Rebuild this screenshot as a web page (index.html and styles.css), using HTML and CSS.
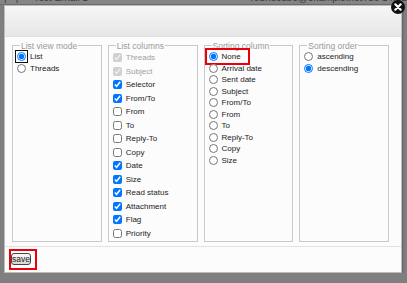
FILE: index.html
```html
<!DOCTYPE html>
<html lang="en">
  <head>
    <meta charset="UTF-8" />
    <meta name="viewport" content="width=device-width, initial-scale=1.0" />
    <title>List options</title>
    <link rel="stylesheet" href="styles.css">
  </head>
  <body>
    <div class="backdrop">
      <div class="backdrop-row">
        <span class="bd-flag">|</span>
        <span class="bd-flag">|</span>
        <span class="bd-subject">Test Email 1</span>
        <span class="bd-from">roundcube@example.net</span>
        <span class="bd-date">Tue 14:02</span>
      </div>
    </div>

    <div class="dialog">
      <div class="dialog-title">
        <span class="close-btn">
          <svg width="14" height="14" viewBox="0 0 14 14">
            <circle cx="7" cy="7" r="7" fill="#111" />
            <path d="M4.3 4.3 L9.7 9.7 M9.7 4.3 L4.3 9.7" stroke="#fff" stroke-width="2.2" stroke-linecap="round" />
          </svg>
        </span>
      </div>

      <div class="dialog-body">
        <fieldset class="group">
          <legend>List view mode</legend>
          <label class="row"><input type="radio" name="mode" class="focused" checked> List</label>
          <label class="row"><input type="radio" name="mode"> Threads</label>
        </fieldset>

        <fieldset class="group tall">
          <legend>List columns</legend>
          <label class="row disabled"><input type="checkbox" checked disabled> Threads</label>
          <label class="row disabled"><input type="checkbox" checked disabled> Subject</label>
          <label class="row"><input type="checkbox" checked> Selector</label>
          <label class="row"><input type="checkbox" checked> From/To</label>
          <label class="row"><input type="checkbox"> From</label>
          <label class="row"><input type="checkbox"> To</label>
          <label class="row"><input type="checkbox"> Reply-To</label>
          <label class="row"><input type="checkbox"> Copy</label>
          <label class="row"><input type="checkbox" checked> Date</label>
          <label class="row"><input type="checkbox" checked> Size</label>
          <label class="row"><input type="checkbox" checked> Read status</label>
          <label class="row"><input type="checkbox" checked> Attachment</label>
          <label class="row"><input type="checkbox" checked> Flag</label>
          <label class="row"><input type="checkbox"> Priority</label>
        </fieldset>

        <fieldset class="group">
          <legend>Sorting column</legend>
          <label class="row marked"><input type="radio" name="sort" checked> None<span class="mark"></span></label>
          <label class="row"><input type="radio" name="sort"> Arrival date</label>
          <label class="row"><input type="radio" name="sort"> Sent date</label>
          <label class="row"><input type="radio" name="sort"> Subject</label>
          <label class="row"><input type="radio" name="sort"> From/To</label>
          <label class="row"><input type="radio" name="sort"> From</label>
          <label class="row"><input type="radio" name="sort"> To</label>
          <label class="row"><input type="radio" name="sort"> Reply-To</label>
          <label class="row"><input type="radio" name="sort"> Copy</label>
          <label class="row"><input type="radio" name="sort"> Size</label>
        </fieldset>

        <fieldset class="group">
          <legend>Sorting order</legend>
          <label class="row"><input type="radio" name="order"> ascending</label>
          <label class="row"><input type="radio" name="order" checked> descending</label>
        </fieldset>
      </div>

      <div class="dialog-footer">
        <span class="save-mark"><button class="btn">save</button></span>
      </div>
    </div>
  </body>
</html>
```

FILE: styles.css
```css
body {
  margin: 0;
  padding: 0;
  background-color: #7f7f7f;
  font-family: "Liberation Sans", Arial, sans-serif;
  font-size: 8px;
  color: #222;
}
.backdrop {
  height: 5px;
  overflow: hidden;
  background: #858585;
  border-bottom: 1px solid #6c6c6c;
  box-sizing: border-box;
}
.backdrop-row {
  display: flex;
  margin-top: -8px;
  font-size: 10px;
  color: #3a3a3a;
  white-space: nowrap;
}
.bd-flag {
  width: 8px;
  margin-left: 4px;
}
.bd-subject {
  margin-left: 10px;
  width: 225px;
}
.bd-from {
  width: 115px;
}
.dialog {
  position: relative;
  width: 398px;
  height: 268px;
  margin-left: 4px;
  background: #fcfcfc;
  border: 1px solid #bdbdbd;
  box-sizing: border-box;
  box-shadow: 1px 1px 2px rgba(0, 0, 0, 0.25);
  display: flex;
  flex-direction: column;
}
.dialog-title {
  height: 30px;
  background: linear-gradient(#f6f6f6, #e7e7e7);
  border-bottom: 1px solid #dedede;
}
.close-btn {
  position: absolute;
  right: -4px;
  top: -6px;
  width: 14px;
  height: 14px;
}
.dialog-body {
  display: grid;
  grid-template-columns: repeat(4, 1fr);
  gap: 6px;
  padding: 4px 12px 0 7px;
  height: 206px;
  box-sizing: border-box;
}
.group {
  margin: 0;
  padding: 0 4px;
  border: 1px solid #c9c9c9;
  min-width: 0;
}
.group legend {
  color: #9a9a9a;
  padding: 0 1px;
  margin-left: 3px;
  font-size: 8.5px;
  line-height: 10px;
}
.row {
  display: flex;
  align-items: center;
  height: 11.5px;
  position: relative;
  white-space: nowrap;
}
.tall .row {
  height: 13.5px;
}
.row input {
  width: 9px;
  height: 9px;
  margin: 0 4px 0 0;
}
.row.disabled {
  color: #a0a0a0;
}
.focused {
  border-radius: 50%;
  box-shadow: 0 0 0 1px #fff, 0 0 0 2px #111;
}
.mark {
  position: absolute;
  left: -4px;
  top: -3px;
  width: 45px;
  height: 17px;
  border: 2px solid #e8000b;
  box-sizing: border-box;
}
.dialog-footer {
  margin-top: 4px;
  border-top: 1px solid #e2e2e2;
  padding: 2px 4px;
}
.save-mark {
  display: inline-block;
  border: 2px solid #e8000b;
  padding: 2px 4px 3px 0;
}
.btn {
  display: block;
  width: 20px;
  height: 12px;
  padding: 0;
  font-family: "Liberation Sans", Arial, sans-serif;
  font-size: 8.5px;
  line-height: 10px;
  color: #222;
  background: linear-gradient(#fafafa, #d8d8d8);
  border: 1px solid #444;
  border-radius: 3px;
}
```
